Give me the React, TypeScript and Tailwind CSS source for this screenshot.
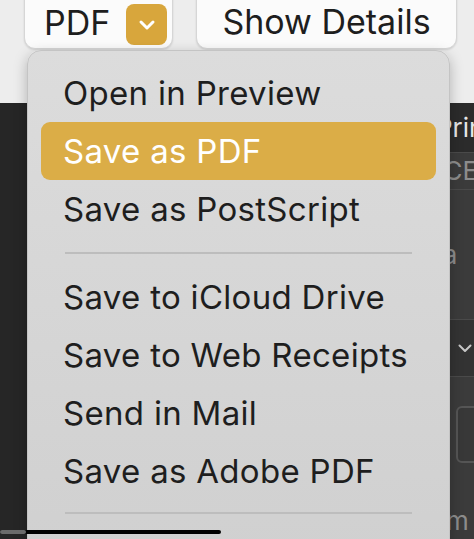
import React from "react";

const items1 = ["Open in Preview", "Save as PDF", "Save as PostScript"];
const items2 = ["Save to iCloud Drive", "Save to Web Receipts", "Send in Mail", "Save as Adobe PDF"];

const MenuRow = ({ label, active }: { label: string; active?: boolean }) => (
  <div
    className={`h-[58px] mx-[13px] px-[22px] flex items-center rounded-[9px] text-[33px] leading-none tracking-[0.3px] ${
      active ? "bg-[#dbad47] text-white" : "text-[#1e1e1e]"
    }`}
  >
    {label}
  </div>
);

const Separator = () => (
  <div className="h-[30px] flex items-center px-[37px]">
    <div className="h-[2px] w-[348px] bg-[#bdbdbd]" />
  </div>
);

export default function App() {
  return (
    <div
      className="relative w-[474px] h-[539px] overflow-hidden bg-[#262626]"
      style={{ fontFamily: "Inter, 'Open Sans', sans-serif" }}
    >
      {/* toolbar */}
      <div className="h-[103px] bg-[#ededed] flex items-start pl-[24px] gap-[23px]">
        <div className="-mt-[12px] h-[61px] w-[149px] rounded-[11px] bg-[#fbfbfb] border border-[#d6d6d6] shadow-[0_1px_2px_rgba(0,0,0,0.12)] flex items-end pb-[3px] pl-[19px] pr-[5px]">
          <span className="text-[34px] leading-none text-[#1e1e1e] mb-[5px]">PDF</span>
          <div className="ml-auto w-[41px] h-[41px] rounded-[8px] bg-[#d8a63c] flex items-center justify-center">
            <svg width="18" height="12" viewBox="0 0 18 12" fill="none">
              <path d="M3 3l6 6 6-6" stroke="white" strokeWidth="3" strokeLinecap="round" strokeLinejoin="round" />
            </svg>
          </div>
        </div>
        <div className="-mt-[12px] h-[61px] w-[261px] rounded-[11px] bg-[#fbfbfb] border border-[#d6d6d6] shadow-[0_1px_2px_rgba(0,0,0,0.12)] flex items-end justify-center pb-[9px]">
          <span className="text-[34px] leading-none text-[#1e1e1e]">Show Details</span>
        </div>
      </div>

      {/* dark window below */}
      <div className="flex h-[436px]">
        <div className="flex-1 bg-[#262626]" />
        <div className="w-[100px] bg-[#3b3b3b] flex flex-col text-[26px] leading-none">
          <div className="h-[50px] bg-[#2b2b2b] flex items-center pl-[62px] text-[#e6e6e6] border-b border-[#4a4a4a]">
            Printer
          </div>
          <div className="h-[37px] flex items-center pl-[53px] text-[#8c8c8c] border-b border-[#4a4a4a]">
            PCE
          </div>
          <div className="h-[130px] flex items-center pl-[8px] text-[#8c8c8c] border-b border-[#4a4a4a]">
            Media
          </div>
          <div className="h-[57px] bg-[#333333] flex items-center pl-[84px] border-b border-[#4a4a4a]">
            <svg width="14" height="9" viewBox="0 0 14 9" fill="none">
              <path d="M1.5 1.5l5.5 5.5 5.5-5.5" stroke="#c8c8c8" strokeWidth="2" strokeLinecap="round" strokeLinejoin="round" />
            </svg>
          </div>
          <div className="pt-[29px] pl-[82px]">
            <div className="h-[57px] w-[40px] rounded-[6px] border-2 border-[#555555] bg-[#383838]" />
          </div>
          <div className="mt-[45px] pl-[40px] text-[#8c8c8c]">Sum</div>
        </div>
      </div>

      {/* popup menu */}
      <div className="absolute left-[27px] top-[50px] w-[423px] h-[510px] rounded-[14px] bg-gradient-to-b from-[#dcdcdc] to-[#d0d0d0] border border-[#c4c4c4] shadow-[0_4px_14px_rgba(0,0,0,0.25)] pt-[13px]">
        {items1.map((t, i) => (
          <MenuRow key={t} label={t} active={i === 1} />
        ))}
        <Separator />
        {items2.map((t) => (
          <MenuRow key={t} label={t} />
        ))}
        <div className="h-[30px] flex items-start pt-[12px] px-[37px]">
          <div className="h-[2px] w-[348px] bg-[#bdbdbd]" />
        </div>
      </div>

      {/* scroll indicator */}
      <div className="absolute left-0 top-[530px] w-[221px] h-[4px] rounded-full bg-black">
        <div className="w-[26px] h-[4px] rounded-full bg-[#6b6b6b]" />
      </div>
    </div>
  );
}
